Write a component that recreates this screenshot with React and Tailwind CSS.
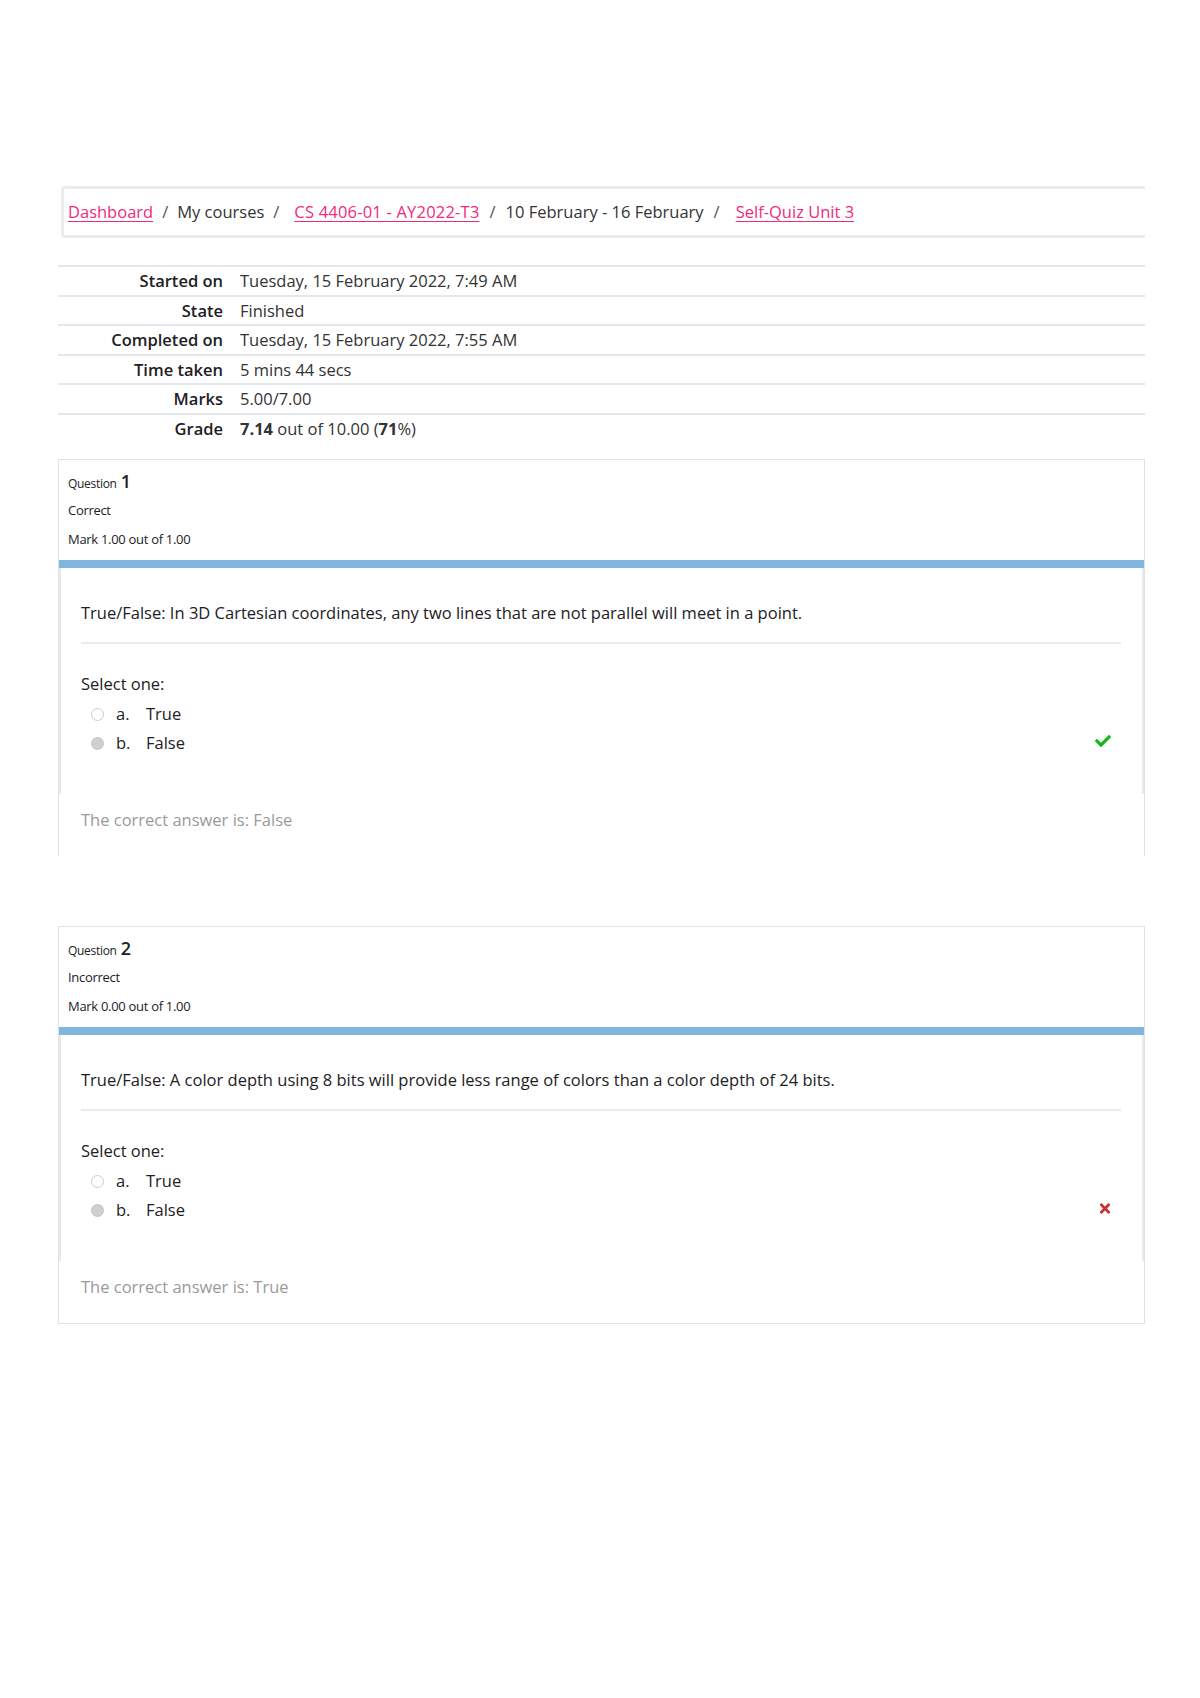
import React from "react";

function CheckIcon() {
  return (
    <svg viewBox="0 0 512 512" className="w-[16px] h-[16px]" fill="#14b814">
      <path d="M173.9 439.4l-166.4-166.4c-10-10-10-26.2 0-36.2l36.2-36.2c10-10 26.2-10 36.2 0L192 312.7 432.1 72.6c10-10 26.2-10 36.2 0l36.2 36.2c10 10 10 26.2 0 36.2l-294.4 294.4c-10 10-26.2 10-36.2 0z" />
    </svg>
  );
}

function CrossIcon() {
  return (
    <svg viewBox="0 0 352 512" className="w-[12px] h-[15px]" fill="#ca3131">
      <path d="M242.7 256l100.1-100.1c12.3-12.3 12.3-32.2 0-44.5l-22.2-22.2c-12.3-12.3-32.2-12.3-44.5 0L176 189.3 75.9 89.2c-12.3-12.3-32.2-12.3-44.5 0L9.2 111.4c-12.3 12.3-12.3 32.2 0 44.5L109.3 256 9.2 356.1c-12.3 12.3-12.3 32.2 0 44.5l22.2 22.2c12.3 12.3 32.2 12.3 44.5 0L176 322.7l100.1 100.1c12.3 12.3 32.2 12.3 44.5 0l22.2-22.2c12.3-12.3 12.3-32.2 0-44.5L242.7 256z" />
    </svg>
  );
}

function Radio({ checked }) {
  return checked ? (
    <span className="inline-block w-[13px] h-[13px] rounded-full bg-[#cfcfcf] border border-[#c4c4c4]" />
  ) : (
    <span className="inline-block w-[13px] h-[13px] rounded-full bg-white border border-[#cdcdcd]" />
  );
}

function Question({ num, state, mark, text, answer, correct, last }) {
  return (
    <div
      className={
        "ml-[58px] w-[1087px] border-t border-l border-r border-[#dee2e6] " +
        (last ? "border-b" : "")
      }
    >
      <div className="pt-[9px] pb-[9px] pl-[9px] flex flex-col gap-[5px] text-[#1d2125]">
        <div className="leading-[24px] h-[24px] flex items-baseline">
          <span className="text-[12px] tracking-[-0.3px]">Question</span>
          <span className="text-[18px] font-semibold ml-[4px]">{num}</span>
        </div>
        <div className="leading-[24px] h-[24px] text-[13px] tracking-[-0.3px]">{state}</div>
        <div className="leading-[24px] h-[24px] text-[13px] tracking-[-0.3px]">{mark}</div>
      </div>
      <div className="h-[8px] bg-[#80b6dd]" />
      <div className="border-l-2 border-r-2 border-[#e6e9ed] pl-[20px] pr-[21px] pt-[34px] pb-[36px] text-[#1d2125]">
        <div className="leading-[22px] text-[16.5px]">{text}</div>
        <div className="mt-[18px] h-[2px] bg-[#e9ecef]" />
        <div className="mt-[29px] leading-[22px] text-[16.5px]">Select one:</div>
        <div className="mt-[5px]">
          <div className="h-[29px] flex items-center text-[16.5px]">
            <span className="ml-[10px] flex items-center">
              <Radio checked={false} />
            </span>
            <span className="ml-[12px] w-[30px]">a.</span>
            <span>True</span>
          </div>
          <div className="h-[29px] flex items-center text-[16.5px]">
            <span className="ml-[10px] flex items-center">
              <Radio checked={true} />
            </span>
            <span className="ml-[12px] w-[30px]">b.</span>
            <span>False</span>
            <span className="ml-auto mr-[10px] mb-[4px] flex items-center">
              {correct ? <CheckIcon /> : <CrossIcon />}
            </span>
          </div>
        </div>
      </div>
      <div className="pl-[22px] pt-[15px] pb-[25px] leading-[22px] text-[16.5px] text-[#9a9a9a]">
        The correct answer is: {answer}
      </div>
    </div>
  );
}

export default function App() {
  const rows = [
    ["Started on", "Tuesday, 15 February 2022, 7:49 AM"],
    ["State", "Finished"],
    ["Completed on", "Tuesday, 15 February 2022, 7:55 AM"],
    ["Time taken", "5 mins 44 secs"],
    ["Marks", "5.00/7.00"],
  ];
  return (
    <div className="w-[1200px] min-h-[1698px] bg-white font-['Open_Sans',sans-serif] text-[#1d2125] pt-[186px] pb-[40px]">
      <div className="ml-[61px] w-[1084px] h-[52px] border-t-[3px] border-b-[3px] border-l-[3px] border-[#e8ebef] rounded-l-[4px] flex items-center pl-[4px] text-[16.5px] text-[#333]">
        <a className="text-[#ef2a7d] underline underline-offset-[3px]">Dashboard</a>
        <span className="mx-[9px] text-[#555]">/</span>
        <span>My courses</span>
        <span className="mx-[9px] text-[#555]">/</span>
        <a className="ml-[6px] text-[#ef2a7d] underline underline-offset-[3px] tracking-[0.2px]">CS 4406-01 - AY2022-T3</a>
        <span className="mx-[10px] text-[#555]">/</span>
        <span>10 February - 16 February</span>
        <span className="mx-[10px] text-[#555]">/</span>
        <a className="ml-[6px] text-[#ef2a7d] underline underline-offset-[3px]">Self-Quiz Unit 3</a>
      </div>

      <div className="mt-[27px] ml-[58px] w-[1087px] text-[16.5px]">
        {rows.map(([k, v]) => (
          <div key={k} className="flex border-t-2 border-[#e3e6ea] py-[3px] leading-[21.6px]">
            <div className="w-[173px] text-right pr-[8px] font-semibold text-[#1d2125]">{k}</div>
            <div className="pl-[9px] text-[#333]">{v}</div>
          </div>
        ))}
        <div className="flex border-t-2 border-[#e3e6ea] py-[3px] leading-[21.6px]">
          <div className="w-[173px] text-right pr-[8px] font-semibold text-[#1d2125]">Grade</div>
          <div className="pl-[9px] text-[#333]">
            <b className="font-bold">7.14</b> out of 10.00 (<b className="font-bold">71</b>%)
          </div>
        </div>
      </div>

      <div className="mt-[16px]">
        <Question
          num="1"
          state="Correct"
          mark="Mark 1.00 out of 1.00"
          text="True/False: In 3D Cartesian coordinates, any two lines that are not parallel will meet in a point."
          answer="False"
          correct={true}
          last={false}
        />
      </div>
      <div className="mt-[70px]">
        <Question
          num="2"
          state="Incorrect"
          mark="Mark 0.00 out of 1.00"
          text="True/False: A color depth using 8 bits will provide less range of colors than a color depth of 24 bits."
          answer="True"
          correct={false}
          last={true}
        />
      </div>
    </div>
  );
}
